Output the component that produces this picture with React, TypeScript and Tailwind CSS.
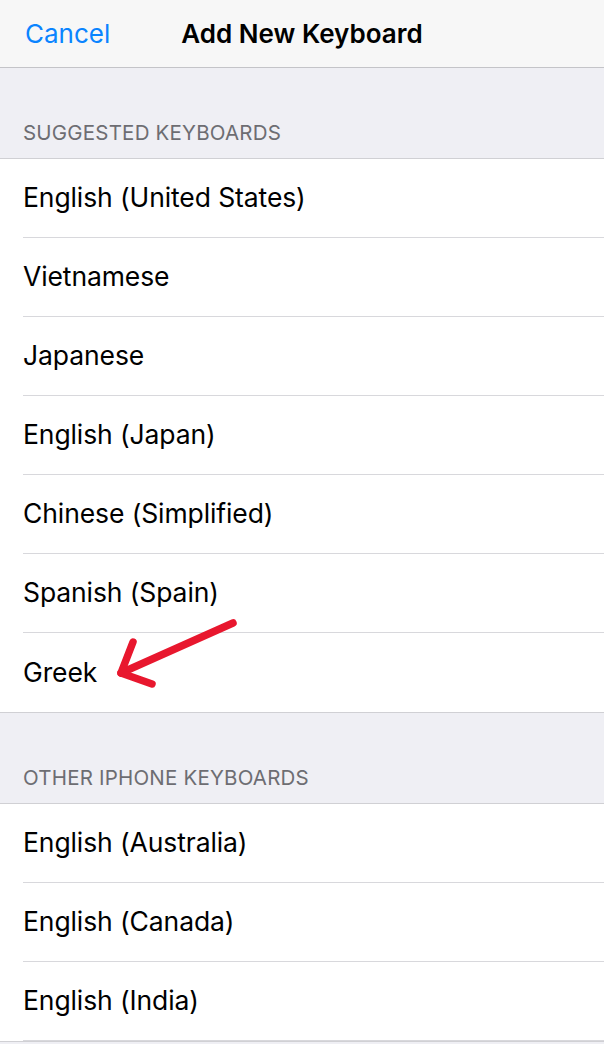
import React from "react";

const suggested = [
  "English (United States)",
  "Vietnamese",
  "Japanese",
  "English (Japan)",
  "Chinese (Simplified)",
  "Spanish (Spain)",
  "Greek",
];
const other = ["English (Australia)", "English (Canada)", "English (India)"];

function Row({ label, last }: { label: string; last?: boolean }) {
  return (
    <div className="pl-[23px] bg-white">
      <div
        className={
          "h-[79px] flex items-center text-[26.5px] text-black " +
          (last ? "" : "border-b border-[#d8d8dc]")
        }
      >
        <span className="tracking-[-0.1px]">{label}</span>
      </div>
    </div>
  );
}

function Header({ title }: { title: string }) {
  return (
    <div className="h-[91px] flex items-end pb-[9px] pl-[23px] border-b border-[#d0d0d4] text-[#6d6d72] text-[20.5px] tracking-[0.2px]">
      {title}
    </div>
  );
}

export default function App() {
  return (
    <div
      className="w-[604px] h-[1044px] overflow-hidden bg-[#efeff4] relative"
      style={{ fontFamily: "Inter, 'Liberation Sans', sans-serif" }}
    >
      <div className="h-[68px] bg-[#f7f7f7] border-b border-[#c4c4c8] relative flex items-center justify-center">
        <span className="absolute left-[25px] text-[26px] text-[#0a84ff]">Cancel</span>
        <span className="text-[26px] font-semibold text-black">Add New Keyboard</span>
      </div>
      <Header title="SUGGESTED KEYBOARDS" />
      <div className="border-b border-[#d0d0d4]">
        {suggested.map((s, i) => (
          <Row key={s} label={s} last={i === suggested.length - 1} />
        ))}
      </div>
      <Header title="OTHER IPHONE KEYBOARDS" />
      <div className="border-b border-[#d0d0d4]">
        {other.map((s) => (
          <Row key={s} label={s} />
        ))}
      </div>
      <svg
        className="absolute left-0 top-0"
        width="604"
        height="1044"
        viewBox="0 0 604 1044"
      >
        <g stroke="#e8172e" strokeWidth="7.5" strokeLinecap="round" strokeLinejoin="round" fill="none">
          <path d="M233 623 L121 673" />
          <path d="M133 642 L121 673 L152 684" />
        </g>
      </svg>
    </div>
  );
}
